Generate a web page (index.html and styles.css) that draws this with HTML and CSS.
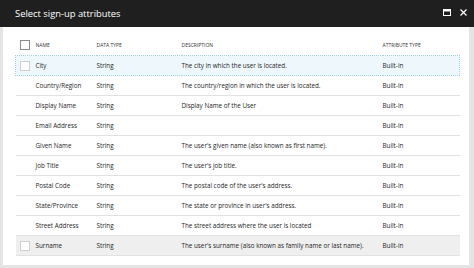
FILE: index.html
```html
<!DOCTYPE html>
<html lang="en">

<head>
    <meta charset="UTF-8">
    <title>Select sign-up attributes</title>
    <link rel="stylesheet" href="styles.css">
</head>

<body>

    <section class="blade">
        <header class="blade-header">
            <h1>Select sign-up attributes</h1>
            <div class="blade-actions">
                <button class="icon-btn" aria-label="Maximize">
                    <svg width="8" height="7" viewBox="0 0 8 7">
                        <rect x="0.5" y="0.5" width="7" height="6" fill="none" stroke="#fff" stroke-width="1"/>
                        <rect x="0.5" y="0.5" width="7" height="2" fill="#fff"/>
                    </svg>
                </button>
                <button class="icon-btn" aria-label="Close">
                    <svg width="7" height="7" viewBox="0 0 7 7">
                        <path d="M0.5 0.5 L6.5 6.5 M6.5 0.5 L0.5 6.5" stroke="#fff" stroke-width="1.2"/>
                    </svg>
                </button>
            </div>
        </header>

        <div class="blade-content">
            <table class="attr-table">
                <colgroup>
                    <col class="col-check">
                    <col class="col-name">
                    <col class="col-type">
                    <col class="col-desc">
                    <col class="col-attr">
                </colgroup>
                <thead>
                    <tr>
                        <th><span class="check"></span></th>
                        <th>Name</th>
                        <th>Data type</th>
                        <th>Description</th>
                        <th>Attribute type</th>
                    </tr>
                </thead>
                <tbody>
                    <tr class="focused">
                        <td><span class="check light"></span></td>
                        <td>City</td>
                        <td>String</td>
                        <td>The city in which the user is located.</td>
                        <td>Built-in</td>
                    </tr>
                    <tr>
                        <td></td>
                        <td>Country/Region</td>
                        <td>String</td>
                        <td>The country/region in which the user is located.</td>
                        <td>Built-in</td>
                    </tr>
                    <tr>
                        <td></td>
                        <td>Display Name</td>
                        <td>String</td>
                        <td>Display Name of the User</td>
                        <td>Built-in</td>
                    </tr>
                    <tr>
                        <td></td>
                        <td>Email Address</td>
                        <td>String</td>
                        <td></td>
                        <td>Built-in</td>
                    </tr>
                    <tr>
                        <td></td>
                        <td>Given Name</td>
                        <td>String</td>
                        <td>The user's given name (also known as first name).</td>
                        <td>Built-in</td>
                    </tr>
                    <tr>
                        <td></td>
                        <td>Job Title</td>
                        <td>String</td>
                        <td>The user's job title.</td>
                        <td>Built-in</td>
                    </tr>
                    <tr>
                        <td></td>
                        <td>Postal Code</td>
                        <td>String</td>
                        <td>The postal code of the user's address.</td>
                        <td>Built-in</td>
                    </tr>
                    <tr>
                        <td></td>
                        <td>State/Province</td>
                        <td>String</td>
                        <td>The state or province in user's address.</td>
                        <td>Built-in</td>
                    </tr>
                    <tr>
                        <td></td>
                        <td>Street Address</td>
                        <td>String</td>
                        <td>The street address where the user is located</td>
                        <td>Built-in</td>
                    </tr>
                    <tr class="selected">
                        <td><span class="check light"></span></td>
                        <td>Surname</td>
                        <td>String</td>
                        <td>The user's surname (also known as family name or last name).</td>
                        <td>Built-in</td>
                    </tr>
                </tbody>
            </table>
        </div>
    </section>

</body>

</html>
```

FILE: styles.css
```css
body {
    margin: 0;
    background-color: #e4e4e4;
    font-family: "Open Sans", "Noto Sans", sans-serif;
}

.blade {
    width: 474px;
    height: 268px;
    display: flex;
    flex-direction: column;
}

.blade-header {
    height: 27px;
    background-color: #1f1f1f;
    display: flex;
    align-items: center;
    justify-content: space-between;
    padding: 0 4px 0 15px;
    flex-shrink: 0;
}

.blade-header h1 {
    margin: 0;
    color: #fff;
    font-size: 9.4px;
    font-weight: normal;
}

.blade-actions {
    display: flex;
    gap: 3px;
    margin-top: -3px;
}

.icon-btn {
    background: none;
    border: none;
    padding: 2px 3px;
    display: flex;
    align-items: center;
}

.blade-content {
    background-color: #fff;
    margin: 0 5px 3px 3px;
    padding: 8px 9px 0 12px;
    flex-grow: 1;
}

.attr-table {
    width: 445px;
    border-collapse: collapse;
    table-layout: fixed;
    color: #262626;
}

.col-check {
    width: 20px;
}

.col-name {
    width: 61px;
}

.col-type {
    width: 85px;
}

.col-desc {
    width: 201px;
}

.attr-table th {
    height: 20px;
    font-size: 5px;
    font-weight: normal;
    text-transform: uppercase;
    text-align: left;
    color: #333;
    padding: 0;
}

.attr-table td {
    height: 19px;
    font-size: 6.3px;
    padding: 0;
    border-bottom: 1px solid #e2e2e2;
    white-space: nowrap;
}

.attr-table td:first-child,
.attr-table th:first-child {
    padding-left: 4px;
}

.check {
    display: block;
    width: 8px;
    height: 8px;
    border: 1px solid #8a8a8a;
    background-color: #fff;
}

.check.light {
    border-color: #cfcfcf;
}

.focused td {
    background-color: #eef8fc;
    border-top: 1px dotted #9fcfe0;
    border-bottom: 1px dotted #9fcfe0;
}

.focused td:first-child {
    border-left: 1px dotted #9fcfe0;
}

.focused td:last-child {
    border-right: 1px dotted #9fcfe0;
}

.selected td {
    background-color: #efefef;
}
```
